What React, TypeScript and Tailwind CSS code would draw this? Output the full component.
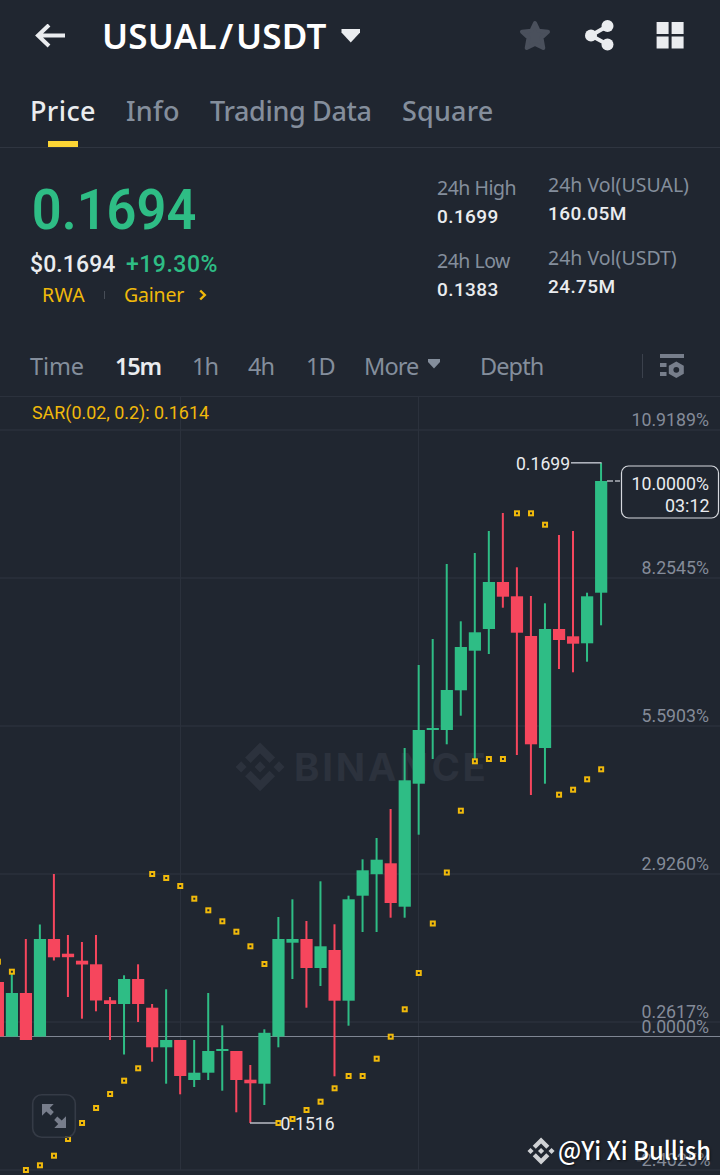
import React from "react";

type Candle = [high: number, top: number, bottom: number, low: number, side: "u" | "d"];

const STEP = 14.03;
const FIRST_X = 11.8;

/* Vertical positions are in page pixels, the chart starts at y = 396. */
const candles: Candle[] = [
  [982, 982, 1036.5, 1036.5, "d"],
  [972, 993, 1036.5, 1036.5, "u"],
  [939, 993, 1040, 1040, "d"],
  [924.5, 939, 1036.5, 1036.5, "u"],
  [874, 939, 957.3, 960.5, "d"],
  [935, 953.7, 957.2, 997, "d"],
  [942, 960.7, 964.5, 1018.7, "d"],
  [935, 964.3, 1000.5, 1011.3, "d"],
  [997, 1000.3, 1004, 1040, "d"],
  [975.3, 979, 1004, 1054.5, "u"],
  [964.3, 979, 1004, 1022, "d"],
  [1004, 1007.7, 1047.3, 1061.7, "d"],
  [989.3, 1040, 1047.3, 1083.7, "u"],
  [1040, 1040, 1076, 1094.3, "d"],
  [1040, 1072.7, 1080, 1087, "u"],
  [993, 1051, 1072.7, 1080, "u"],
  [1025.3, 1049, 1051, 1090.7, "u"],
  [1051, 1051, 1080, 1112.3, "d"],
  [1065, 1079.7, 1083.3, 1123, "d"],
  [1029.3, 1032.8, 1083.7, 1105, "u"],
  [917, 939, 1036.5, 1047.3, "u"],
  [899.3, 939, 942.7, 979, "u"],
  [921, 939, 968, 1007.7, "d"],
  [881.3, 946.3, 968, 986, "u"],
  [924.3, 950, 1000.7, 1076.3, "d"],
  [895.7, 899.3, 1000.7, 1025.7, "u"],
  [859.3, 870.3, 895.7, 932, "u"],
  [838, 859.7, 874.2, 932, "u"],
  [809, 863.3, 903, 917.7, "d"],
  [748, 780.3, 906.7, 917.7, "u"],
  [665, 730, 783.7, 834.7, "u"],
  [639, 728, 730, 759, "u"],
  [564, 690, 730, 744.3, "u"],
  [621.3, 647, 690.3, 715.7, "u"],
  [553, 632.3, 650.7, 762, "u"],
  [531, 582, 629, 654, "u"],
  [513, 582, 596.7, 607.7, "d"],
  [567.3, 596.3, 632.7, 755, "d"],
  [596, 636, 744.3, 795, "d"],
  [603.3, 629, 748, 783.7, "u"],
  [535, 629, 640, 669, "d"],
  [531, 636.3, 643.7, 672.3, "d"],
  [592.7, 596.3, 643.3, 661.7, "u"],
  [462.7, 481, 592.7, 625.3, "u"],
];

const sar: number[] = [
  961.7, 971.7, 1170, 1165.3, 1155.7, 1139, 1123, 1108, 1094, 1080.7, 1068.3, 874, 878, 886, 898.7,
  910.3, 921.3, 931.7, 946.3, 964, 1123, 1119, 1110, 1101.7, 1088.3, 1076, 1076, 1058.7, 1036.7,
  1009.3, 973, 923.5, 872.5, 810.7, 761.3, 759, 759, 513.3, 513.3, 524.7, 794.7, 789.7, 779.3, 769.3,
];

const xAt = (i: number) => FIRST_X + (i - 1) * STEP;

const axis: [label: string, baseline: number, width: number, right: number][] = [
  ["10.9189%", 425.7, 77.5, 709],
  ["8.2545%", 573.7, 67.5, 709],
  ["5.5903%", 721.7, 67.5, 709],
  ["2.9260%", 869.7, 67.5, 709],
  ["0.2617%", 1017.7, 67.5, 709],
  ["0.0000%", 1032.7, 67.5, 709],
  ["-2.4025%", 1165.7, 74, 710.5],
];

function BinanceMark() {
  return (
    <path d="M12 0l7.35 7.35-2.72 2.71L12 5.42l-4.64 4.66-2.72-2.73zM12 24l7.35-7.35-2.72-2.71L12 18.58l-4.64-4.66-2.72 2.73zM21.28 9.28L24 12l-2.72 2.72L18.57 12zM2.72 9.28L5.43 12l-2.71 2.72L0 12zM12 9.28L14.72 12 12 14.72 9.28 12z" />
  );
}

function Chart() {
  return (
    <svg
      className="block h-[779px] w-[720px] shrink-0 font-['Roboto',sans-serif]"
      viewBox="0 396 720 779"
      fontSize="18"
    >
      <g fill="#2b313c">
        <rect x="0" y="395" width="720" height="2" />
        {[429, 577, 725, 873, 1021, 1169].map((y) => (
          <rect key={y} x="0" y={y + 0.3} width="720" height="1.4" />
        ))}
        <rect x="180" y="397" width="1" height="773" />
        <rect x="418" y="397" width="1" height="773" />
      </g>
      <g fill="#2c323d">
        <g transform="translate(235.6 742.4) scale(2.04)">
          <BinanceMark />
        </g>
        <text
          x="294"
          y="781"
          fontSize="38.5"
          fontWeight="700"
          textLength="192"
          className="font-['Inter',sans-serif]"
        >
          BINANCE
        </text>
      </g>
      <g fill="#848b99">
        {axis.map(([label, y, w, right]) => (
          <text key={label} x={right - w} y={y} textLength={w} lengthAdjust="spacingAndGlyphs">
            {label}
          </text>
        ))}
      </g>
      <rect x="0" y="1036" width="720" height="1" fill="#7f8693" />
      <text x="32" y="419" fill="#f0b90b" textLength="177" lengthAdjust="spacingAndGlyphs">
        SAR(0.02, 0.2): 0.1614
      </text>
      {candles.map(([high, top, bottom, low, side], i) => (
        <g key={i} fill={side === "u" ? "#2ebd85" : "#f6465d"}>
          <rect x={xAt(i) - 1} y={high} width="2" height={low - high} />
          <rect x={xAt(i) - 6} y={top} width="12.2" height={bottom - top} />
        </g>
      ))}
      <rect x="571" y="462" width="30.5" height="1.6" fill="#aeb2bb" />
      <rect x="250" y="1122.2" width="27" height="1.6" fill="#aeb2bb" />
      {sar.map((y, i) => (
        <rect
          key={i}
          x={xAt(i) - 1.9}
          y={y - 2}
          width="4"
          height="4"
          fill="#202630"
          stroke="#f0b90b"
          strokeWidth="2"
        />
      ))}
      <g fill="#eaecef">
        <text x="516" y="470" textLength="54" lengthAdjust="spacingAndGlyphs">
          0.1699
        </text>
        <text x="280.5" y="1130" textLength="54" lengthAdjust="spacingAndGlyphs">
          0.1516
        </text>
      </g>
      <path d="M607 481h6M615 481h5" stroke="#aeb2bb" strokeWidth="1.5" />
      <rect x="621.5" y="466" width="97" height="52" rx="7" fill="#202630" stroke="#d5d8dd" strokeWidth="1.2" />
      <g fill="#eaecef">
        <text x="631.5" y="490" textLength="77.5" lengthAdjust="spacingAndGlyphs">
          10.0000%
        </text>
        <text x="665" y="512" textLength="44.5" lengthAdjust="spacingAndGlyphs">
          03:12
        </text>
      </g>
      <rect x="32.7" y="1094.7" width="42.6" height="42.6" rx="9" fill="#202630" fillOpacity=".6" stroke="#353b46" strokeWidth="1.6" />
      <g fill="#777d8b">
        <path d="M42 1104h11.7l-3.9 3.9 4 4-3.1 3.6-4.4-4-4.3 4.2z" />
        <path d="M66 1128h-11.7l3.9-3.9-4-4 3.1-3.6 4.4 4 4.3-4.2z" />
      </g>
      <g>
        <g transform="translate(527.5 1137.4) scale(1.13)" fill="#cfd1d4">
          <BinanceMark />
        </g>
        <text
          x="558"
          y="1160.300"
          fontSize="25"
          fontWeight="500"
          fill="#ffffff"
          textLength="153"
          lengthAdjust="spacingAndGlyphs"
          className="font-['Noto_Sans_CJK_SC',sans-serif] [text-shadow:1px_1px_2px_rgba(0,0,0,0.6)]"
        >
          @Yi Xi Bullish
        </text>
      </g>
    </svg>
  );
}

function Header() {
  return (
    <header className="flex h-[72px] items-center pl-[35px]">
      <svg className="h-6 w-[30px]" viewBox="0 0 30 24" fill="none" stroke="#eaecef" strokeWidth="4">
        <path d="M3 11.5h27M14 1L3 11.5 14 22" />
      </svg>
      <h1 className="ml-[37px] w-[239px] text-[35px] leading-[72px] font-semibold tracking-[0.2px] whitespace-nowrap text-white">
        USUAL<span className="mx-[2.500px]">/</span>USDT
      </h1>
      <svg className="h-[14px] w-[19px]" viewBox="0 0 19 14" fill="#eaecef">
        <path d="M.5 0h18.500v3.500L9.750 13.500.5 3.500z" />
      </svg>
      <svg className="mb-[2px] ml-[159px] h-8 w-8" viewBox="0 0 32 32" fill="#4a505c" stroke="#4a505c" strokeWidth="4" strokeLinejoin="round">
        <path d="M16 4l3.500 7.700 9.500 1-6.500 6.200 1.800 10.100L16 25 7.700 29l1.800-10.100L3 12.700l9.500-1z" />
      </svg>
      <svg className="ml-[34px] h-8 w-[30px]" viewBox="0 0 30 32" fill="#eaecef" stroke="#eaecef" strokeWidth="4">
        <path d="M22.500 6L6 15.500 22.500 24.500" fill="none" />
        <g stroke="none">
          <circle cx="6" cy="15.500" r="6" />
          <circle cx="22.500" cy="6" r="6" />
          <circle cx="22.500" cy="24.500" r="6" />
        </g>
      </svg>
      <svg className="ml-[41px] h-7 w-7" viewBox="0 0 28 28" fill="#eaecef">
        <path d="M.6 0h12v12h-12zM15.600 0h12v12h-12zM.6 14.600h12v12h-12zM15.600 14.600h12v12h-12z" />
      </svg>
    </header>
  );
}

function Tabs() {
  return (
    <nav className="flex h-[76px] border-b border-[#2f3540] pl-[30px] text-[27px] leading-[78px] font-medium whitespace-nowrap text-[#848e9c]">
      <div className="flex w-[96px] flex-col tracking-[0.4px] text-[#eaecef]">
        <span className="h-[69px]">Price</span>
        <span className="ml-[18px] h-1.5 w-[30px] bg-[#fcd535]" />
      </div>
      <span className="w-[84px] tracking-[0.3px]">Info</span>
      <span className="w-[192px] tracking-[-0.35px]">Trading Data</span>
      <span className="tracking-[0.2px]">Square</span>
    </nav>
  );
}

function Stat({ label, value, gap }: { label: string; value: string; gap?: boolean }) {
  return (
    <div className={gap ? "mb-[15px]" : ""}>
      <div className="text-[19.5px] leading-[28px] text-[#848e9c]">{label}</div>
      <div className="font-['Roboto',sans-serif] text-[19px] leading-[29.500px] font-medium tracking-[0.4px] text-[#eaecef]">
        {value}
      </div>
    </div>
  );
}

function Summary() {
  return (
    <section className="flex h-[190px] whitespace-nowrap">
      <div className="w-[437px] pt-[30px] pl-[30px]">
        <div className="w-max origin-left scale-x-[0.935] pl-[2px] font-['Roboto',sans-serif] text-[56px] leading-[64px] font-semibold text-[#2ebd85]">
          0.1694
        </div>
        <div className="mt-[5px] flex font-['Roboto',sans-serif] text-[23px] leading-[36px] font-medium">
          <span className="w-[96px] tracking-[0.1px] text-[#eaecef]">$0.1694</span>
          <span className="tracking-[0.5px] text-[#2ebd85]">+19.30%</span>
        </div>
        <div className="flex items-center pl-3 text-[19.5px] leading-[24px] text-[#f0b90b]">
          <span className="w-[62px] tracking-[0.4px]">RWA</span>
          <span className="h-2 w-px bg-[#474d57]" />
          <span className="ml-[19px] w-[75px] tracking-[-0.2px]">Gainer</span>
          <svg className="h-3 w-2" viewBox="0 0 8 12" fill="none" stroke="#f0b90b" strokeWidth="2.400">
            <path d="M1.200 1.500L5.800 6 1.200 10.500" />
          </svg>
        </div>
      </div>
      <div className="w-[111px] pt-[26px] tracking-[-0.5px]">
        <Stat label="24h High" value="0.1699" gap />
        <Stat label="24h Low" value="0.1383" />
      </div>
      <div className="pt-[23px]">
        <Stat label="24h Vol(USUAL)" value="160.05M" gap />
        <Stat label="24h Vol(USDT)" value="24.75M" />
      </div>
    </section>
  );
}

function Periods() {
  return (
    <div className="mb-[2px] flex h-[56px] items-center pl-[30px] text-[23.500px] leading-[56px] tracking-[-0.9px] whitespace-nowrap text-[#848e9c]">
      <span className="w-[85px] tracking-[-0.1px]">Time</span>
      <span className="w-[77px] font-semibold tracking-[-1.2px] text-[#eaecef]">15m</span>
      <span className="w-[56px]">1h</span>
      <span className="w-[58px]">4h</span>
      <span className="w-[58px]">1D</span>
      <span className="w-[64px]">More</span>
      <svg className="mb-1 h-[10px] w-3" viewBox="0 0 12 10" fill="#848e9c">
        <path d="M0 0h12v3L6 9.500 0 3z" />
      </svg>
      <span className="ml-[40px] w-[162px]">Depth</span>
      <span className="h-6 w-px bg-[#3b414c]" />
      <svg className="ml-[17px] h-6 w-6" viewBox="0 0 24 24" fill="#777e8b">
        <path d="M0 0h24v4H0zM0 9h6.500v4H0zM0 18h6.500v4H0z" />
        <path fillRule="evenodd" d="M16.300 7.500l7.500 4.200v8l-7.500 4.200-7.500-4.200v-8zM16.300 12.900a2.900 2.900 0 1 0 0 5.800 2.900 2.900 0 0 0 0-5.800z" />
      </svg>
    </div>
  );
}

export default function App() {
  return (
    <div className="flex h-[1175px] w-[720px] flex-col overflow-hidden bg-[#202630] font-['Noto_Sans',sans-serif]">
      <Header />
      <Tabs />
      <Summary />
      <Periods />
      <Chart />
    </div>
  );
}
